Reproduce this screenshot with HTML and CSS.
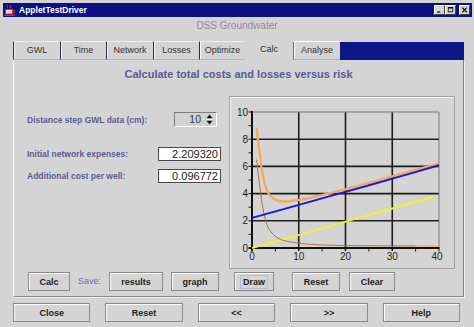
FILE: index.html
```html
<!DOCTYPE html>
<html>

<head>
    <title>AppletTestDriver</title>
    <link rel="stylesheet" href="styles.css">
</head>

<body>
    <div class="titlebar">
        <svg class="app_icon" viewBox="0 0 12 11">
            <path d="M3.5 0.5c-1 1 1 2 0 3M6.5 0.5c-1 1 1 2 0 3" stroke="#e03a3a" fill="none" />
            <rect x="1.5" y="4.5" width="7" height="4.5" fill="#f6d0d0" stroke="#c83030" />
            <path d="M8.5 5.5h2v2h-2" stroke="#c83030" fill="none" />
            <rect x="0" y="9.5" width="11" height="1.5" fill="#c83030" />
        </svg>
        <span class="title_text">AppletTestDriver</span>
        <div class="title_buttons">
            <span class="win_btn">
                <svg viewBox="0 0 9 8"><rect x="1.5" y="6" width="4" height="1.5" fill="#000" /></svg>
            </span>
            <span class="win_btn">
                <svg viewBox="0 0 9 8"><rect x="1.5" y="0.5" width="6" height="6" fill="none" stroke="#000" /><rect x="1.5" y="0.5" width="6" height="1.5" fill="#000" /></svg>
            </span>
            <span class="win_btn win_close">
                <svg viewBox="0 0 9 8"><path d="M1.5 0.8l6 6.4M7.5 0.8l-6 6.4" stroke="#000" stroke-width="1.6" /></svg>
            </span>
        </div>
    </div>

    <div class="app_name">DSS Groundwater</div>

    <div class="tabs">
        <div class="tab tab_gwl">GWL</div>
        <div class="tab tab_time">Time</div>
        <div class="tab tab_network">Network</div>
        <div class="tab tab_losses">Losses</div>
        <div class="tab tab_optimize">Optimize</div>
        <div class="tab tab_selected">Calc</div>
        <div class="tab tab_analyse">Analyse</div>
        <div class="tab_fill"></div>
    </div>

    <div class="tab_panel">
        <h1 class="calc_heading">Calculate total costs and losses versus risk</h1>

        <div class="calc_body">
            <div class="calc_form">
                <div class="form_row row_distance">
                    <label class="form_label">Distance step GWL data (cm):</label>
                    <div class="spinner">
                        <span class="spinner_value">10</span>
                        <span class="spinner_arrows">
                            <svg viewBox="0 0 7 12">
                                <path d="M3.5 1L6.5 4.8H0.5z" fill="#111" />
                                <path d="M0.5 6H6.5" stroke="#fff" />
                                <path d="M3.5 11L6.5 7.2H0.5z" fill="#111" />
                            </svg>
                        </span>
                    </div>
                </div>
                <div class="form_row row_initial">
                    <label class="form_label">Initial network expenses:</label>
                    <input class="number_field" type="text" value="2.209320" />
                </div>
                <div class="form_row row_additional">
                    <label class="form_label">Additional cost per well:</label>
                    <input class="number_field" type="text" value="0.096772" />
                </div>
            </div>

            <div class="chart_box">
                <svg class="chart" width="224" height="171" viewBox="0 0 224 171">
                    <!-- grid -->
                    <g stroke="#1c1c1c" stroke-width="1.6">
                        <line x1="68.75" y1="15" x2="68.75" y2="154" />
                        <line x1="115.5" y1="15" x2="115.5" y2="154" />
                        <line x1="162.25" y1="15" x2="162.25" y2="154" />
                        <line x1="22" y1="123.8" x2="209" y2="123.8" />
                        <line x1="22" y1="96.6" x2="209" y2="96.6" />
                        <line x1="22" y1="69.4" x2="209" y2="69.4" />
                        <line x1="22" y1="42.2" x2="209" y2="42.2" />
                    </g>
                    <g stroke="#7a7a7a" stroke-width="1">
                        <line x1="22" y1="15" x2="209" y2="15" />
                        <line x1="209" y1="15" x2="209" y2="151" />
                    </g>
                    <!-- ticks -->
                    <g stroke="#1c1c1c" stroke-width="1">
                        <line x1="18.5" y1="15" x2="22" y2="15" />
                        <line x1="18.5" y1="28.6" x2="22" y2="28.6" />
                        <line x1="18.5" y1="42.2" x2="22" y2="42.2" />
                        <line x1="18.5" y1="55.8" x2="22" y2="55.8" />
                        <line x1="18.5" y1="69.4" x2="22" y2="69.4" />
                        <line x1="18.5" y1="83" x2="22" y2="83" />
                        <line x1="18.5" y1="96.6" x2="22" y2="96.6" />
                        <line x1="18.5" y1="110.2" x2="22" y2="110.2" />
                        <line x1="18.5" y1="123.8" x2="22" y2="123.8" />
                        <line x1="18.5" y1="137.4" x2="22" y2="137.4" />
                        <line x1="45.4" y1="151" x2="45.4" y2="154.5" />
                        <line x1="92.1" y1="151" x2="92.1" y2="154.5" />
                        <line x1="138.9" y1="151" x2="138.9" y2="154.5" />
                        <line x1="185.6" y1="151" x2="185.6" y2="154.5" />
                        <line x1="209" y1="151" x2="209" y2="154.5" />
                    </g>
                    <!-- axes -->
                    <g stroke="#111" stroke-width="2">
                        <line x1="22" y1="14" x2="22" y2="154.5" />
                        <line x1="18.5" y1="151" x2="209.5" y2="151" />
                    </g>
                    <!-- labels -->
                    <g class="chart_labels" text-anchor="end">
                        <text x="18" y="18.5">10</text>
                        <text x="18" y="45.7">8</text>
                        <text x="18" y="72.9">6</text>
                        <text x="18" y="100.1">4</text>
                        <text x="18" y="127.3">2</text>
                        <text x="18" y="154.5">0</text>
                    </g>
                    <g class="chart_labels" text-anchor="middle">
                        <text x="22" y="163">0</text>
                        <text x="68.75" y="163">10</text>
                        <text x="115.5" y="163">20</text>
                        <text x="162.25" y="163">30</text>
                        <text x="207" y="163">40</text>
                    </g>
                    <!-- data -->
                    <polyline fill="none" stroke="#f2f232" stroke-width="2"
                        points="22,151 70,137.6 120,123.4 165,110.8 204.3,99.7" />
                    <polyline fill="none" stroke="#a87a3a" stroke-width="1"
                        points="26.7,62.6 28.1,76.2 29.9,89.8 31.35,102 33.7,115.6 36,125.2 38.4,131.3 40.7,134.7 45.4,139.4 50.05,142.2 54.7,143.8 59.4,144.9 68.75,146.2 78.1,147.2 92.1,148 115.5,148.6 185.6,149" />
                    <polyline fill="none" stroke="#e8a468" stroke-width="1.2"
                        points="185.6,149 209,149.1" />
                    <polyline fill="none" stroke="#f6aa58" stroke-width="2.4"
                        points="26.7,31.2 28.1,44.4 29.9,57.5 31.35,69.4 33.7,82.3 36,91.2 38.4,96.6 40.7,99.4 45.4,102.8 50.05,104.2 54.7,104.5 59.4,104.3 68.75,103 78.1,101.3 92.1,98.2 115.5,92.2 162.25,79.4 209,66.4" />
                    <polyline fill="none" stroke="#1818d6" stroke-width="2"
                        points="22,120.9 60,110.4 100,99.1 140,88 180,76.6 209,68.3" />
                </svg>
            </div>
        </div>

        <div class="calc_actions">
            <button class="btn btn_calc">Calc</button>
            <span class="save_label">Save:</span>
            <button class="btn btn_results">results</button>
            <button class="btn btn_graph">graph</button>
            <button class="btn btn_draw"><span class="focus_ring">Draw</span></button>
            <button class="btn btn_reset">Reset</button>
            <button class="btn btn_clear">Clear</button>
        </div>
    </div>

    <div class="footer">
        <button class="btn">Close</button>
        <button class="btn">Reset</button>
        <button class="btn">&lt;&lt;</button>
        <button class="btn">&gt;&gt;</button>
        <button class="btn">Help</button>
    </div>
</body>

</html>
```

FILE: styles.css
```css
body {
    margin: 0;
    width: 474px;
    height: 327px;
    overflow: hidden;
    background-color: #d4d4d4;
    font-family: 'Liberation Sans', Arial, sans-serif;
}

/* title bar */
.titlebar {
    margin: 3px 2px 0 3px;
    height: 14px;
    padding-left: 1px;
    display: flex;
    align-items: center;
    background-color: #0b1082;
}

.app_icon {
    width: 12px;
    height: 11px;
    margin-right: 3px;
}

.title_text {
    color: #ffffff;
    font-size: 8.5px;
    font-weight: bold;
}

.title_buttons {
    margin-left: auto;
    padding-right: 2px;
    display: flex;
}

.win_btn {
    width: 11px;
    height: 10px;
    box-sizing: border-box;
    padding: 1px;
    background-color: #d4d4d4;
    border: 1px solid;
    border-color: #ffffff #404040 #404040 #ffffff;
    display: flex;
}

.win_btn svg {
    width: 100%;
    height: 100%;
}

.win_close {
    margin-left: 3px;
}

.app_name {
    margin-top: 2px;
    line-height: 14px;
    text-align: center;
    font-size: 10px;
    color: #8e8ea6;
}

/* tabs */
.tabs {
    margin: 8px 0 0 13px;
    height: 19px;
    display: flex;
}

.tab {
    width: 46px;
    height: 19px;
    box-sizing: border-box;
    border-left: 1px solid #2c2c4c;
    border-top: 1px solid #ececec;
    box-shadow: inset 1px 0 0 #f4f4f4;
    border-bottom: 1px solid #b4b4b4;
    text-align: center;
    line-height: 17px;
    font-size: 9px;
    color: #333333;
}

.tab_gwl,
.tab_network {
    width: 47px;
}

.tab_selected {
    width: 48px;
    border-left: none;
    border-top: none;
    border-bottom: none;
    box-shadow: none;
}

.tab_analyse {
    width: 47px;
    border-left: 1px solid #6a6a6a;
    border-top: 1px solid #ffffff;
    box-shadow: inset 1px 0 0 #ffffff;
}

.tab_fill {
    width: 124px;
    margin-top: 1px;
    height: 18px;
    background-color: #0d1788;
}

/* panel */
.tab_panel {
    margin-left: 13px;
    width: 451px;
    height: 237px;
    box-sizing: border-box;
    padding-top: 7px;
    border-left: 1px solid #fafafa;
    border-right: 1px solid #848484;
    border-bottom: 1px solid #8c8c8c;
    box-shadow: 1px 1px 0 #efefef;
}

.calc_heading {
    margin: 0;
    line-height: 14px;
    text-align: center;
    font-size: 11px;
    font-weight: bold;
    color: #5a5a96;
}

.calc_body {
    margin-top: 15px;
    display: flex;
}

.calc_form {
    width: 215px;
    box-sizing: border-box;
    padding: 16px 8px 0 13px;
    display: flex;
    flex-direction: column;
}

.form_row {
    display: flex;
    align-items: center;
    justify-content: space-between;
    height: 14px;
}

.row_distance {
    height: 15px;
}

.row_initial {
    margin-top: 20px;
}

.row_additional {
    margin-top: 8px;
}

.form_label {
    font-size: 8.5px;
    font-weight: bold;
    color: #5c5c98;
}

.spinner {
    width: 43px;
    height: 15px;
    margin-right: 4px;
    box-sizing: border-box;
    border: 1px solid;
    border-color: #7c7c7c #ffffff #ffffff #7c7c7c;
    display: flex;
    background-color: #d2d2d2;
}

.spinner_value {
    flex: 1;
    text-align: right;
    padding-right: 2px;
    line-height: 13px;
    font-size: 10.5px;
    color: #3a3a3a;
}

.spinner_arrows {
    width: 11px;
    padding: 0 1px;
    display: flex;
}

.spinner_arrows svg {
    width: 7px;
    height: 13px;
    margin: 0 auto;
}

.number_field {
    width: 63px;
    height: 14px;
    box-sizing: border-box;
    padding: 0 2px 0 0;
    border: 1px solid #4a4a4a;
    background-color: #ffffff;
    text-align: right;
    font-family: 'Liberation Sans', Arial, sans-serif;
    font-size: 11px;
    color: #222222;
}

.chart_box {
    width: 226px;
    height: 173px;
    box-sizing: border-box;
    border: 1px solid #a2a2a2;
    box-shadow: inset 1px 1px 0 #f6f6f6;
}

.chart {
    display: block;
}

.chart_labels {
    font-family: 'Liberation Sans', Arial, sans-serif;
    font-size: 10px;
    fill: #1e1e1e;
}

/* buttons */
.btn {
    height: 19px;
    box-sizing: border-box;
    padding: 0;
    border: 1px solid #8a8a8a;
    box-shadow: inset 1px 1px 0 #fbfbfb;
    background-color: #d4d4d4;
    font-family: 'Liberation Sans', Arial, sans-serif;
    font-size: 9px;
    font-weight: bold;
    color: #1e1e1e;
}

.calc_actions {
    margin-top: 3px;
    padding-left: 14px;
    display: flex;
}

.btn_calc {
    width: 42px;
}

.save_label {
    margin-left: 8px;
    line-height: 19px;
    font-size: 9px;
    color: #6c6cc0;
}

.btn_results {
    width: 54px;
    margin-left: 8px;
}

.btn_graph {
    width: 48px;
    margin-left: 8px;
}

.btn_draw {
    width: 40px;
    margin-left: 15px;
}

.focus_ring {
    padding: 1px 2px;
    outline: 1px solid #b8b8e0;
}

.btn_reset {
    width: 48px;
    margin-left: 18px;
}

.btn_clear {
    width: 46px;
    margin-left: 9px;
}

.footer {
    margin: 6px 0 0 13px;
    width: 447px;
    display: grid;
    grid-template-columns: repeat(5, 1fr);
    column-gap: 15px;
}
```
